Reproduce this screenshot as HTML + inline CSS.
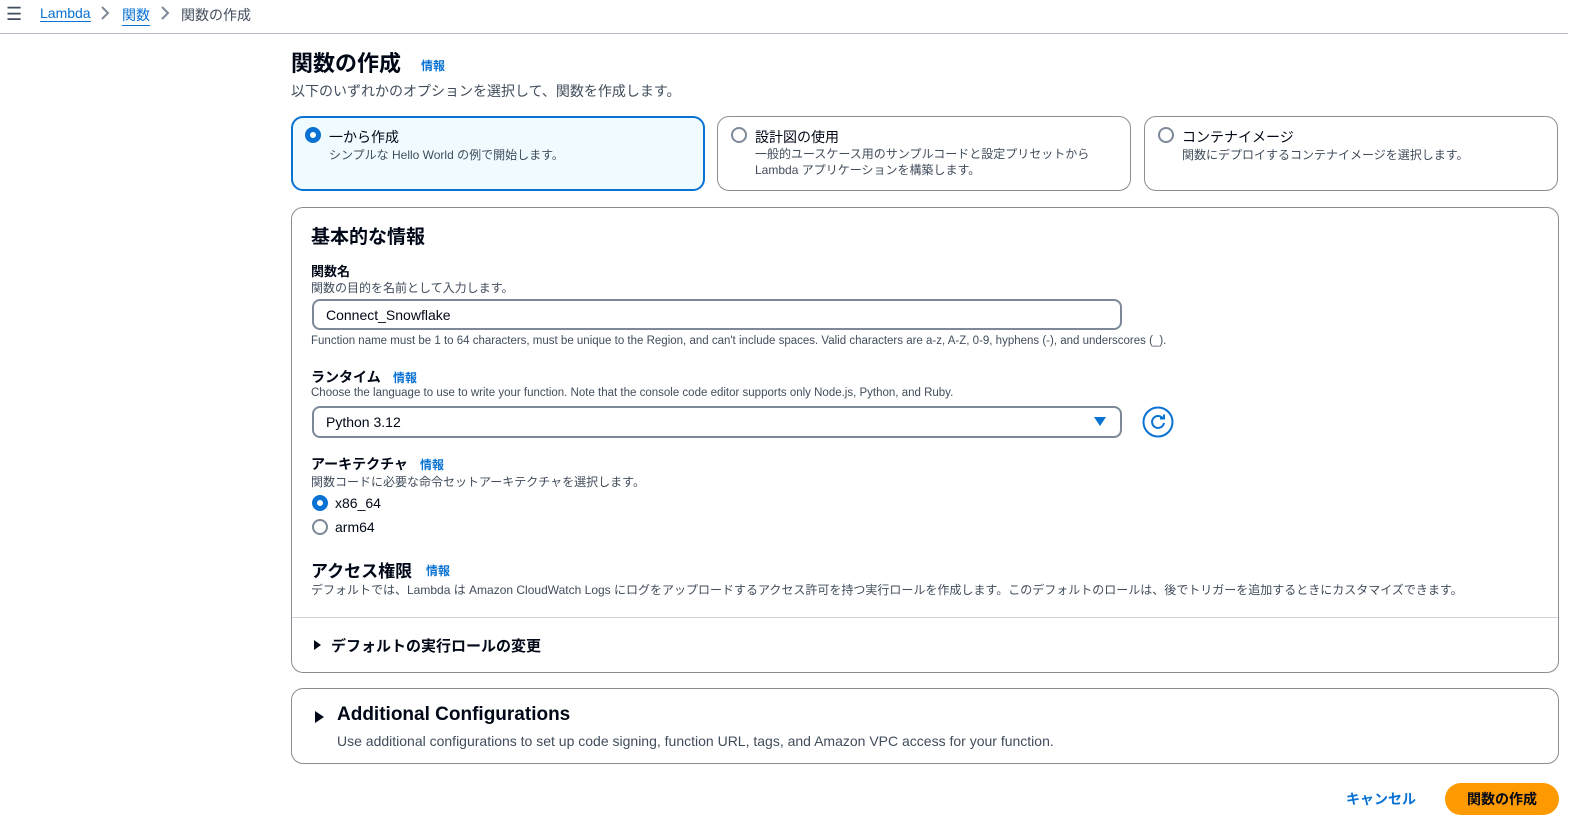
<!DOCTYPE html>
<html><head><meta charset="utf-8"><style>
*{box-sizing:border-box;margin:0;padding:0}
body{width:1583px;height:827px;overflow:hidden;background:#fff;font-family:"Liberation Sans","Noto Sans CJK JP",sans-serif;color:#000716;position:relative}
.a{position:absolute;white-space:nowrap}
.link{color:#0972d3;font-size:12px;font-weight:bold}
.card{position:absolute;border:1px solid #8c8c94;border-radius:12px;background:#fff}
.sel{border:2px solid #0972d3;background:#f0fbff}
.rad{position:absolute;width:16px;height:16px;border-radius:50%;border:2px solid #7d8998;background:#fff}
.rad.on{border:5px solid #0972d3}
.sm{font-size:12px;color:#414d5c}
.lbl{font-size:14px;font-weight:bold;color:#000716}
.input{position:absolute;border:2px solid #7d8998;border-radius:8px;background:#fff;font-size:14px;padding:0 12px;line-height:28px}
</style></head><body>
<div class="a" style="left:6px;top:4px;font-size:18px;color:#414d5c">☰</div>
<div class="a" style="left:40px;top:5px;font-size:14px;color:#0972d3;border-bottom:1px solid #0972d3">Lambda</div>
<svg class="a" style="left:100px;top:6px" width="10" height="14" viewBox="0 0 10 14"><path d="M2 1l6 6-6 6" fill="none" stroke="#7d8998" stroke-width="2"/></svg>
<div class="a" style="left:122px;top:5px;font-size:14px;color:#0972d3;border-bottom:1px solid #0972d3">関数</div>
<svg class="a" style="left:160px;top:6px" width="10" height="14" viewBox="0 0 10 14"><path d="M2 1l6 6-6 6" fill="none" stroke="#7d8998" stroke-width="2"/></svg>
<div class="a" style="left:181px;top:5px;font-size:14px;color:#414d5c">関数の作成</div>
<div class="a" style="left:0;top:33px;width:1568px;height:1px;background:#b6bec9"></div>

<div class="a" style="left:291px;top:46px;font-size:22px;font-weight:bold">関数の作成</div>
<div class="a link" style="left:421px;top:57px">情報</div>
<div class="a" style="left:291px;top:81px;font-size:14px;color:#414d5c">以下のいずれかのオプションを選択して、関数を作成します。</div>

<div class="card sel" style="left:291px;top:116px;width:414px;height:75px"></div>
<div class="rad on" style="left:305px;top:127px"></div>
<div class="a" style="left:329px;top:127px;font-size:14px">一から作成</div>
<div class="a sm" style="left:329px;top:146px">シンプルな Hello World の例で開始します。</div>

<div class="card" style="left:717px;top:116px;width:414px;height:75px"></div>
<div class="rad" style="left:731px;top:127px"></div>
<div class="a" style="left:755px;top:127px;font-size:14px">設計図の使用</div>
<div class="a sm" style="left:755px;top:146px;line-height:16px">一般的ユースケース用のサンプルコードと設定プリセットから<br>Lambda アプリケーションを構築します。</div>

<div class="card" style="left:1144px;top:116px;width:414px;height:75px"></div>
<div class="rad" style="left:1158px;top:127px"></div>
<div class="a" style="left:1182px;top:127px;font-size:14px">コンテナイメージ</div>
<div class="a sm" style="left:1182px;top:146px">関数にデプロイするコンテナイメージを選択します。</div>

<div class="card" style="left:291px;top:207px;width:1268px;height:466px"></div>
<div class="a" style="left:311px;top:222px;font-size:19px;font-weight:bold">基本的な情報</div>
<div class="a lbl" style="left:311px;top:261px;font-size:13px">関数名</div>
<div class="a sm" style="left:311px;top:279px">関数の目的を名前として入力します。</div>
<div class="input" style="left:312px;top:299px;width:810px;height:31px">Connect_Snowflake</div>
<div class="a sm" style="left:311px;top:335px;font-size:11.5px">Function name must be 1 to 64 characters, must be unique to the Region, and can't include spaces. Valid characters are a-z, A-Z, 0-9, hyphens (-), and underscores (_).</div>

<div class="a lbl" style="left:311px;top:367px">ランタイム</div>
<div class="a link" style="left:393px;top:369px">情報</div>
<div class="a sm" style="left:311px;top:387px;font-size:11.5px">Choose the language to use to write your function. Note that the console code editor supports only Node.js, Python, and Ruby.</div>
<div class="input" style="left:312px;top:406px;width:810px;height:32px">Python 3.12</div>
<div class="a" style="left:1094px;top:417px;width:0;height:0;border-left:6px solid transparent;border-right:6px solid transparent;border-top:9px solid #0972d3"></div>
<svg class="a" style="left:1142px;top:406px" width="32" height="32" viewBox="0 0 32 32"><circle cx="16" cy="16" r="14.5" fill="none" stroke="#0972d3" stroke-width="2"/><path d="M21 12.5A6 6 0 1 0 22 17" fill="none" stroke="#0972d3" stroke-width="2"/><path d="M18 12.5h4v-4" fill="none" stroke="#0972d3" stroke-width="2"/></svg>

<div class="a lbl" style="left:311px;top:454px">アーキテクチャ</div>
<div class="a link" style="left:420px;top:456px">情報</div>
<div class="a sm" style="left:311px;top:473px">関数コードに必要な命令セットアーキテクチャを選択します。</div>
<div class="rad on" style="left:312px;top:495px"></div>
<div class="a" style="left:335px;top:495px;font-size:14px">x86_64</div>
<div class="rad" style="left:312px;top:519px"></div>
<div class="a" style="left:335px;top:519px;font-size:14px">arm64</div>

<div class="a" style="left:311px;top:557px;font-size:17px;font-weight:bold">アクセス権限</div>
<div class="a link" style="left:426px;top:562px">情報</div>
<div class="a sm" style="left:311px;top:581px">デフォルトでは、Lambda は Amazon CloudWatch Logs にログをアップロードするアクセス許可を持つ実行ロールを作成します。このデフォルトのロールは、後でトリガーを追加するときにカスタマイズできます。</div>
<div class="a" style="left:292px;top:617px;width:1266px;height:1px;background:#d1d5db"></div>
<div class="a" style="left:314px;top:640px;width:0;height:0;border-top:5px solid transparent;border-bottom:5px solid transparent;border-left:7px solid #000716"></div>
<div class="a" style="left:331px;top:635px;font-size:15px;font-weight:bold">デフォルトの実行ロールの変更</div>

<div class="card" style="left:291px;top:688px;width:1268px;height:76px"></div>
<div class="a" style="left:315px;top:711px;width:0;height:0;border-top:6px solid transparent;border-bottom:6px solid transparent;border-left:9px solid #000716"></div>
<div class="a" style="left:337px;top:704px;font-size:19px;font-weight:bold">Additional Configurations</div>
<div class="a" style="left:337px;top:733px;font-size:14px;color:#414d5c">Use additional configurations to set up code signing, function URL, tags, and Amazon VPC access for your function.</div>

<div class="a" style="left:1346px;top:789px;font-size:14px;font-weight:bold;color:#0972d3">キャンセル</div>
<div class="a" style="left:1445px;top:783px;width:114px;height:32px;border-radius:16px;background:#ff9900;font-size:14px;font-weight:bold;text-align:center;line-height:32px">関数の作成</div>
</body></html>
